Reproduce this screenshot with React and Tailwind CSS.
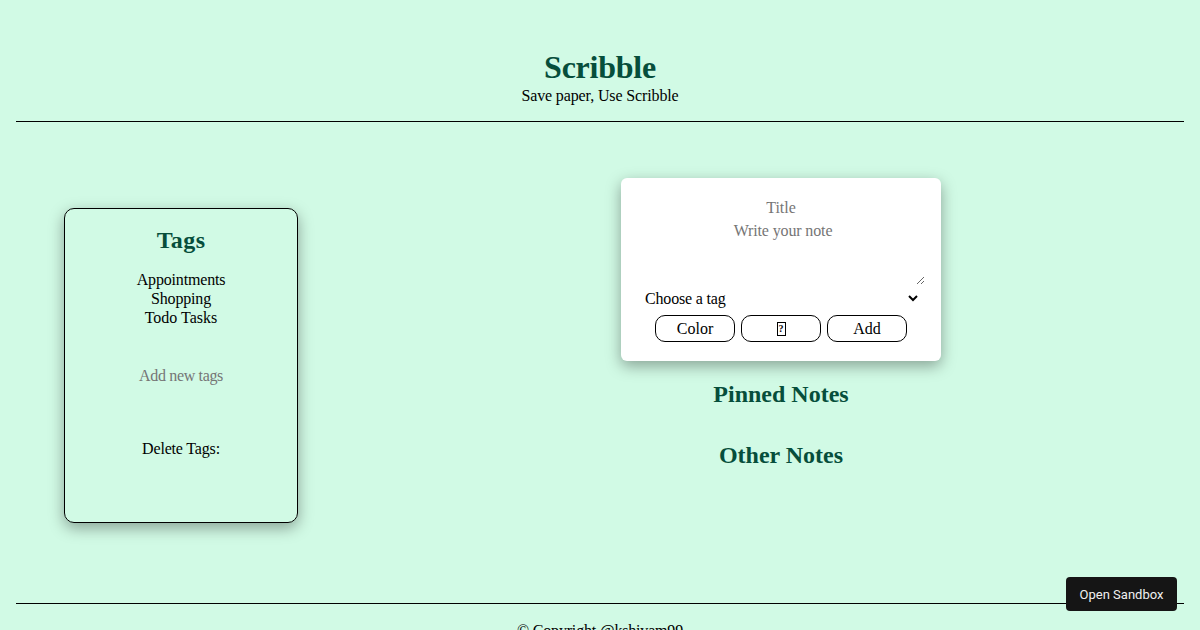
export default function App() {
  return (
    <div className="h-[630px] overflow-hidden bg-[#d1fae5] text-black text-base leading-[19px] relative" style={{ fontFamily: '"Liberation Serif", serif' }}>
      <div className="px-4">
        <header className="pt-[49px] h-[122px] border-b border-black text-center">
          <h1 className="text-[32px] leading-[37px] font-bold text-[#064e3b] tracking-[-0.25px]">Scribble</h1>
          <p className="leading-[19px] tracking-[-0.125px]">Save paper, Use Scribble</p>
        </header>
        <main className="flex h-[481px]">
          <aside className="mt-[86px] ml-[48px] w-[234px] h-[315px] shrink-0 border border-black rounded-[10px] shadow-[0_5px_15px_rgba(0,0,0,0.35)] text-center pt-[18px]">
            <h2 className="text-2xl leading-[27px] font-bold text-[#064e3b] tracking-[0.4px]">Tags</h2>
            <ul className="mt-[16px] leading-[19px] tracking-[-0.17px]">
              <li>Appointments</li>
              <li>Shopping</li>
              <li className="tracking-normal">Todo Tasks</li>
            </ul>
            <input placeholder="Add new tags" className="mt-[40px] w-full text-center bg-transparent outline-none text-base leading-[18px] tracking-[-0.33px] placeholder:text-[#757575]" />
            <p className="mt-[54px] tracking-[-0.17px]">Delete Tags:</p>
          </aside>
          <section className="ml-[323px] w-[320px] shrink-0 mt-[56px]">
            <form className="h-[183px] bg-white rounded-[6px] shadow-[0_5px_15px_rgba(0,0,0,0.35)] px-[20px] pt-[20px]">
              <input placeholder="Title" className="block w-full h-[19px] text-center outline-none text-base placeholder:text-[#757575]" />
              <textarea placeholder="Write your note" rows="3" className="block w-[284px] h-[66px] mt-[2px] text-center outline-none text-base tracking-[-0.13px] resize-y placeholder:text-[#757575]" />
              <select className="block w-full h-[19px] mt-[4px] outline-none bg-white text-base tracking-[-0.17px]">
                <option>Choose a tag</option>
              </select>
              <div className="flex justify-center gap-[6px] mt-[7px]">
                <button type="button" className="w-[80px] h-[27px] border border-black rounded-[10px] text-base">Color</button>
                <button type="button" className="w-[80px] h-[27px] border border-black rounded-[10px] text-base flex items-center justify-center">
                  <span className="w-[9px] h-[14px] border border-black text-[10px] leading-[12px] font-bold flex items-center justify-center">?</span>
                </button>
                <button type="button" className="w-[80px] h-[27px] border border-black rounded-[10px] text-base">Add</button>
              </div>
            </form>
            <h2 className="mt-[20px] text-2xl leading-[27px] font-bold text-[#064e3b] text-center">Pinned Notes</h2>
            <h2 className="mt-[34px] text-2xl leading-[27px] font-bold text-[#064e3b] text-center">Other Notes</h2>
          </section>
        </main>
        <footer className="border-t border-black text-center pt-[17px] tracking-[-0.18px]">© Copyright @kshivam99</footer>
      </div>
      <a className="absolute left-[1066px] top-[577px] w-[111px] h-[34px] rounded-[4px] bg-[#151515] text-[#f0f0f0] text-[13px] flex items-center justify-center" style={{ fontFamily: 'Roboto, sans-serif' }}>Open Sandbox</a>
    </div>
  );
}
